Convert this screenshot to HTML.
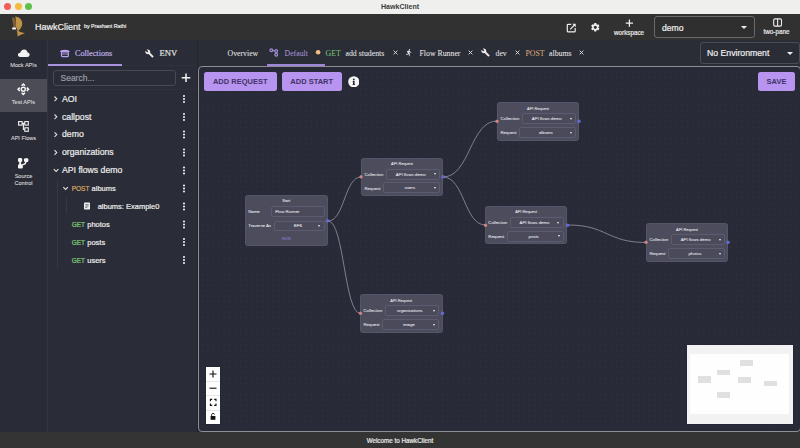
<!DOCTYPE html>
<html><head><meta charset="utf-8">
<style>
*{margin:0;padding:0;box-sizing:border-box}
html,body{width:800px;height:448px;overflow:hidden;background:#2a2c35;font-family:"Liberation Sans",sans-serif;color:#e6e6e6;-webkit-text-stroke-width:0.2px}
.a{position:absolute}
#title{left:0;top:0;width:800px;height:14px;background:#efefed}
.tl{width:7px;height:7px;border-radius:50%;top:3px}
#title .t{left:0;width:800px;top:2.8px;text-align:center;font-size:7.1px;font-weight:bold;color:#3c3c3c;-webkit-text-stroke-width:0}
#hdr{left:0;top:14px;width:800px;height:26px;background:#313131}
#side{left:0;top:40px;width:48px;height:392px;background:#292b36;border-right:1px solid #30323d}
.sl{-webkit-text-stroke-width:0.1px;left:0;width:47px;text-align:center;font-size:5.6px;color:#d8d8d8;line-height:7px}
#coll{left:47px;top:40px;width:151px;height:392px;background:#2a2c37;border-right:1px solid #24252c}
.serif{font-family:"Liberation Serif",serif}
.tree{font-size:8.7px;color:#ededed;white-space:nowrap;line-height:11px}
.dots{left:136px;width:3px}
.dots i{display:block;width:2px;height:2px;background:#f0f0f0;border-radius:50%;margin-bottom:1.2px}
.ch .m{font-size:6.5px}.ch .n{font-size:7.5px;margin-left:2.2px}.chev{font-size:8px;color:#ddd}
#status{left:0;top:432px;width:800px;height:16px;background:#343434}
#canvas{left:197.7px;top:65.8px;width:603.3px;height:366.6px;background:#282a37;border:1.3px solid #8e8e94;border-radius:4px;overflow:hidden}
.btn{-webkit-text-stroke-width:0;background:#b794ef;color:#3f3265;font-size:7.5px;font-weight:bold;border-radius:2.5px;text-align:center;line-height:19px;height:19px}
.node{-webkit-text-stroke-width:0.05px;background:#4c4c5d;border:0.8px solid #55556a;border-radius:2.5px;font-size:4.3px;color:#e8e8ee;line-height:5px}
.node .h{position:absolute;left:0;width:100%;text-align:center;top:2.6px;font-size:3.9px}
.node .lb{position:absolute;left:2.5px}
.node .sel{position:absolute;border:0.8px solid #5c5c70;border-radius:2px;background:#4a4a5b;text-align:center;line-height:9.5px}
.node .sel b{position:absolute;right:3.6px;top:3.8px;width:0;height:0;border-left:1.4px solid transparent;border-right:1.4px solid transparent;border-top:2.1px solid #f0f0f0}
.hd{width:3.1px;height:3.1px;border-radius:50%;margin:-1.55px 0 0 -1.55px;border:0.5px solid rgba(200,200,255,.35)}
.tab{-webkit-text-stroke-width:0.05px;top:48.5px;font-size:7.8px;color:#e6e6e6;white-space:nowrap;line-height:10px}
.x{font-size:8px;color:#e0e0e0}
.ctl{left:7px;width:14px;height:14.3px;background:#fefefe;border-bottom:0.5px solid #eee}
</style></head><body>
<div id="title" class="a">
  <div class="a tl" style="left:4px;background:#ed5f58"></div>
  <div class="a tl" style="left:14.5px;background:#f2bb3b"></div>
  <div class="a tl" style="left:25px;background:#5fc04a"></div>
  <div class="a t">HawkClient</div>
</div>
<div id="hdr" class="a">
  <svg class="a" style="left:10px;top:2px" width="18" height="22" viewBox="0 0 18 22">
    <path d="M2,1.5 C4,0.8 5.6,3 5.9,6 L6,11 L3.6,11.6 C3,8 2.2,4.5 2,1.5Z" fill="#7d5c38"/>
    <path d="M5.2,0.6 C9,1 12,3.5 12.2,7 C12.4,10.5 10.5,13 8.4,14.9 C7,13.5 6.2,12 6,10 C6.2,6.5 6,3 5.2,0.6Z" fill="#bf9347"/>
    <path d="M6.4,13.8 C8,15.4 11,16.5 15,17.2 C12,18.2 9.5,19.2 7.6,20.6 C7.8,18.5 7.2,16 6.4,13.8Z" fill="#bf9347"/>
    <ellipse cx="4.1" cy="12.4" rx="2.1" ry="1.2" fill="#f2f2f2"/>
  </svg>
  <div class="a" style="left:35px;top:8px;font-size:9px;color:#f0f0f0">HawkClient</div>
  <div class="a" style="left:84px;top:9.3px;font-size:5.3px;color:#e6e6e6">by Prashant Rathi</div>
  <!-- right icons -->
  <svg class="a" style="left:565.5px;top:8.5px" width="11" height="10" viewBox="0 0 11 10"><path d="M5.2,1.3 H2.2 C1.6,1.3 1.3,1.6 1.3,2.2 V8 C1.3,8.6 1.6,8.9 2.2,8.9 H8.3 C8.9,8.9 9.2,8.6 9.2,8 V5" fill="none" stroke="#eee" stroke-width="1.2"/><path d="M6.3,0.8 H9.7 V4.2 Z" fill="#eee"/><path d="M9,1.5 L4.2,6.3" stroke="#eee" stroke-width="1.2"/></svg>
  <svg class="a" style="left:589.6px;top:7.6px" width="10.6" height="10.6" viewBox="0 0 24 24"><path fill="#eee" d="M19.14 12.94c.04-.3.06-.61.06-.94 0-.32-.02-.64-.07-.94l2.03-1.58a.49.49 0 0 0 .12-.61l-1.92-3.32a.488.488 0 0 0-.59-.22l-2.39.96c-.5-.38-1.03-.7-1.62-.94l-.36-2.54a.484.484 0 0 0-.48-.41h-3.84c-.24 0-.43.17-.47.41l-.36 2.54c-.59.24-1.13.57-1.62.94l-2.39-.96c-.22-.08-.47 0-.59.22L2.74 8.87c-.12.21-.08.47.12.61l2.03 1.58c-.05.3-.09.63-.09.94s.02.64.07.94l-2.03 1.58a.49.49 0 0 0-.12.61l1.92 3.32c.12.22.37.29.59.22l2.39-.96c.5.38 1.03.7 1.62.94l.36 2.54c.05.24.24.41.48.41h3.84c.24 0 .44-.17.47-.41l.36-2.54c.59-.24 1.13-.56 1.62-.94l2.39.96c.22.08.47 0 .59-.22l1.92-3.32c.12-.22.07-.47-.12-.61l-2.01-1.58zM12 15.6c-1.98 0-3.6-1.62-3.6-3.6s1.62-3.6 3.6-3.6 3.6 1.62 3.6 3.6-1.62 3.6-3.6 3.6z"/></svg>
  <svg class="a" style="left:625px;top:4.5px" width="9" height="8" viewBox="0 0 9 8"><path d="M0.8,4.1 H8 M4.4,0.5 V7.7" stroke="#f0f0f0" stroke-width="1.2"/></svg>
  <div class="a" style="left:614px;top:14.8px;font-size:6.3px;color:#e6e6e6">workspace</div>
  <div class="a" style="left:654px;top:2px;width:101px;height:21.5px;border:1px solid #6a6a6a;border-radius:3px;background:#2f2f2f"></div>
  <div class="a" style="left:662px;top:8.7px;font-size:8.6px;color:#f0f0f0">demo</div>
  <div class="a" style="left:741px;top:12px;width:0;height:0;border-left:3px solid transparent;border-right:3px solid transparent;border-top:3px solid #eee"></div>
  <svg class="a" style="left:771.5px;top:2.5px" width="11" height="11" viewBox="0 0 11 11"><rect x="1.7" y="1.9" width="7.8" height="7.2" rx="1.3" fill="none" stroke="#eee" stroke-width="1.1"/><path d="M5.6,1.9 V9.1" stroke="#eee" stroke-width="1.1"/></svg>
  <div class="a" style="left:763.5px;top:13.8px;font-size:6.3px;color:#e6e6e6">two-pane</div>
</div>
<div id="side" class="a">
  <div class="a" style="left:0;top:39px;width:47px;height:33px;background:#4b4c56"></div>
  <svg class="a" style="left:16.9px;top:9px" width="13.6" height="8.6" viewBox="0 0 13 9"><path d="M3,8.5 C1,8.5 0.2,7 0.4,5.8 C0.6,4.6 1.6,3.8 2.8,3.9 C3.2,1.8 5,0.4 7,0.5 C9,0.6 10.3,2 10.5,3.7 C11.8,3.8 12.7,4.8 12.6,6.1 C12.5,7.5 11.4,8.5 10,8.5Z" fill="#f2f2f2"/></svg>
  <div class="a sl" style="top:22px">Mock APIs</div>
  <svg class="a" style="left:17.1px;top:43.3px" width="12.6" height="12.6" viewBox="2 2 20 20"><path fill="#f4f4f4" d="M15.54 5.54L13.77 7.3 12 5.54 10.23 7.3 8.46 5.54 12 2zm2.92 10l-1.76-1.77L18.46 12l-1.76-1.77 1.76-1.77L22 12zm-10 2.92l1.77-1.76L12 18.46l1.77-1.76 1.77 1.76L12 22zm-2.92-10l1.76 1.77L5.54 12l1.76 1.77-1.76 1.77L2 12z"/><circle cx="12" cy="12" r="3.2" fill="none" stroke="#f4f4f4" stroke-width="2.2"/></svg>
  <div class="a sl" style="top:59px">Test APIs</div>
  <svg class="a" style="left:18px;top:81px" width="11" height="11" viewBox="0 0 11 11"><rect x="0.6" y="0.6" width="3.5" height="3.5" fill="none" stroke="#f2f2f2" stroke-width="1.1"/><rect x="6.8" y="0.6" width="3.5" height="3.5" fill="none" stroke="#f2f2f2" stroke-width="1.1"/><rect x="6.8" y="6.8" width="3.5" height="3.5" fill="none" stroke="#f2f2f2" stroke-width="1.1"/><path d="M4.1,2.35 H6.8 M5.4,2.35 V8.5 H6.8" fill="none" stroke="#f2f2f2" stroke-width="1.1"/></svg>
  <div class="a sl" style="top:95px">API Flows</div>
  <svg class="a" style="left:18.4px;top:118.3px" width="10.6" height="10.6" viewBox="0 0 10.6 10.6"><rect x="0" y="0" width="4.2" height="4" rx="1.2" fill="#f4f4f4"/><rect x="6" y="0.3" width="4.4" height="3.6" rx="1.2" fill="#f4f4f4"/><rect x="0" y="6.2" width="4.8" height="4.3" rx="1.2" fill="#f4f4f4"/><rect x="1.2" y="3" width="1.9" height="4" fill="#f4f4f4"/><path d="M8,3 C8,5.5 6.5,6.6 4.2,6.8" fill="none" stroke="#f4f4f4" stroke-width="1.5"/></svg>
  <div class="a sl" style="top:133px">Source<br>Control</div>
</div>
<div id="coll" class="a">
  <svg class="a" style="left:12px;top:9px" width="12" height="9" viewBox="0 0 12 9"><path d="M0.9,3 C0.9,1.6 2.8,0.8 5.8,0.8 C8.8,0.8 10.7,1.6 10.7,3 Z" fill="#b9a2ee"/><rect x="2.5" y="2.8" width="6.8" height="4.9" rx="1" fill="none" stroke="#b9a2ee" stroke-width="1.2"/><path d="M2.5,5 H9.3" stroke="#b9a2ee" stroke-width="0.9"/></svg>
  <div class="a serif" style="left:28px;top:8.7px;font-size:8.2px;color:#bfaee6;font-weight:normal">Collections</div>
  <svg class="a" style="left:98px;top:8.5px" width="9" height="9" viewBox="0 0 24 24"><path fill="#eee" d="M22.7 19l-9.1-9.1c.9-2.3.4-5-1.5-6.9-2-2-5-2.4-7.4-1.3L9 6 6 9 1.6 4.7C.4 7.1.9 10.1 2.9 12.1c1.9 1.9 4.6 2.4 6.9 1.5l9.1 9.1c.4.4 1 .4 1.4 0l2.3-2.3c.5-.4.5-1.1.1-1.4z"/></svg>
  <div class="a serif" style="left:112.5px;top:7.5px;font-size:8.6px;color:#e0e0e0;font-weight:normal">ENV</div>
  <div class="a" style="left:0;top:25px;width:150px;height:0.6px;background:#30323c"></div>
  <div class="a" style="left:1px;top:24.2px;width:74px;height:1.9px;background:#ab92e0"></div>
  <div class="a" style="left:6px;top:29.5px;width:122.5px;height:16px;border:0.9px solid #474a55;border-radius:3px"></div>
  <div class="a" style="left:13.5px;top:32.5px;font-size:8.5px;color:#9a9ca3">Search...</div>
  <svg class="a" style="left:133px;top:33px" width="12" height="10" viewBox="0 0 12 10"><path d="M1.7,4.7 H10.3 M6,0.4 V9" stroke="#f4f4f4" stroke-width="1.5"/></svg>
  <div class="a" style="left:0;top:49.3px;width:150px;height:0.6px;background:#30323a"></div>
  <!-- tree -->
  <div class="a tree" style="left:15px;top:54px">AOI</div>
  <div class="a tree" style="left:15px;top:72px">callpost</div>
  <div class="a tree" style="left:15px;top:89.3px">demo</div>
  <div class="a tree" style="left:15px;top:107.1px">organizations</div>
  <div class="a tree" style="left:15px;top:125px">API flows demo</div>
  <div class="a tree ch" style="left:24.7px;top:142.7px"><span class="m" style="color:#dea464">POST</span><span class="n">albums</span></div>
  <div class="a tree ch" style="left:50.7px;top:160.8px"><span class="n" style="margin:0">albums: Example0</span></div>
  <div class="a tree ch" style="left:24.7px;top:178.5px"><span class="m" style="color:#80cf7c">GET</span><span class="n">photos</span></div>
  <div class="a tree ch" style="left:24.7px;top:196.5px"><span class="m" style="color:#80cf7c">GET</span><span class="n">posts</span></div>
  <div class="a tree ch" style="left:24.7px;top:214.5px"><span class="m" style="color:#80cf7c">GET</span><span class="n">users</span></div>
</div>
<div class="a" style="left:47px;top:40px;width:0.8px;height:392px;background:#33353f"></div>
<div id="main" class="a" style="left:198px;top:40px;width:602px;height:26px;background:#2a2c36"></div>
<div class="a tab serif" style="left:227.5px">Overview</div>
<div class="a tab serif" style="left:284.5px;color:#a592d6">Default</div>
<div class="a tab serif" style="left:325.5px;color:#74c274">GET</div>
<div class="a tab serif" style="left:345.5px">add students</div>
<div class="a tab serif" style="left:419.5px">Flow Runner</div>
<div class="a tab serif" style="left:495.5px">dev</div>
<div class="a tab serif" style="left:525.5px;color:#d6a878">POST</div>
<div class="a tab serif" style="left:549px">albums</div>
<div class="a" style="left:266.5px;top:64px;width:58.5px;height:1.8px;background:#9d86d9"></div>
<div id="env" class="a" style="left:700px;top:42px;width:99.6px;height:21.5px;border:0.8px solid #4a4c56;border-radius:3px"></div>
<div class="a" style="left:707px;top:47.5px;font-size:8.7px;color:#f0f0f0">No Environment</div>
<div class="a" style="left:787px;top:52px;width:0;height:0;border-left:3px solid transparent;border-right:3px solid transparent;border-top:3px solid #eee"></div>
<div id="canvas" class="a"></div>
<svg class="a" style="left:200px;top:68px" width="600" height="363"><defs><pattern id="dg" patternUnits="userSpaceOnUse" x="0" y="0" width="5.45" height="5.45"><circle cx="2.45" cy="4.7" r="0.6" fill="#313444"/></pattern></defs><rect width="600" height="363" fill="url(#dg)"/></svg>
<!-- tab icons -->
<svg class="a" style="left:269px;top:48px" width="10" height="9" viewBox="0 0 10 9"><g fill="none" stroke="#a08ed4" stroke-width="1.2"><circle cx="2.3" cy="2.2" r="1.4"/><circle cx="7.2" cy="3" r="1.4"/><circle cx="7.2" cy="6.8" r="1.4"/><path d="M3.7,2.5 L5.8,2.8 M7.2,4.4 V5.4"/></g></svg>
<svg class="a" style="left:314px;top:48px" width="8" height="8"><circle cx="4.1" cy="4.3" r="2.3" fill="#f2bf82"/></svg>
<svg class="a" style="left:404.5px;top:47.5px" width="8" height="9" viewBox="0 0 24 24"><path fill="#eee" d="M13.49 5.48c1.1 0 2-.9 2-2s-.9-2-2-2-2 .9-2 2 .9 2 2 2zm-3.6 13.9l1-4.4 2.1 2v6h2v-7.5l-2.1-2 .6-3c1.3 1.5 3.3 2.5 5.5 2.5v-2c-1.9 0-3.5-1-4.3-2.4l-1-1.6c-.4-.6-1-1-1.7-1-.3 0-.5.1-.8.1l-5.2 2.2v4.7h2v-3.4l1.8-.7-1.6 8.1-4.9-1-.4 2 7 1.4z"/></svg>
<svg class="a" style="left:481px;top:47.5px" width="9" height="9" viewBox="0 0 24 24"><path fill="#eee" d="M22.7 19l-9.1-9.1c.9-2.3.4-5-1.5-6.9-2-2-5-2.4-7.4-1.3L9 6 6 9 1.6 4.7C.4 7.1.9 10.1 2.9 12.1c1.9 1.9 4.6 2.4 6.9 1.5l9.1 9.1c.4.4 1 .4 1.4 0l2.3-2.3c.5-.4.5-1.1.1-1.4z"/></svg>
<svg class="a" style="left:392.5px;top:50px" width="5" height="5" viewBox="0 0 5 5"><path d="M0.6,0.6 L4.4,4.4 M4.4,0.6 L0.6,4.4" stroke="#e6e6e6" stroke-width="0.9"/></svg>
<svg class="a" style="left:468px;top:50px" width="5" height="5" viewBox="0 0 5 5"><path d="M0.6,0.6 L4.4,4.4 M4.4,0.6 L0.6,4.4" stroke="#e6e6e6" stroke-width="0.9"/></svg>
<svg class="a" style="left:514.5px;top:50px" width="5" height="5" viewBox="0 0 5 5"><path d="M0.6,0.6 L4.4,4.4 M4.4,0.6 L0.6,4.4" stroke="#e6e6e6" stroke-width="0.9"/></svg>
<svg class="a" style="left:578.5px;top:50px" width="5" height="5" viewBox="0 0 5 5"><path d="M0.6,0.6 L4.4,4.4 M4.4,0.6 L0.6,4.4" stroke="#e6e6e6" stroke-width="0.9"/></svg>
<!-- tree chevrons -->
<svg class="a" style="left:0;top:0" width="200" height="300"><g fill="none" stroke="#e0e0e0" stroke-width="1.1">
<path d="M54.5,96.5 L56.8,98.8 L54.5,101.1"/>
<path d="M54.5,114.5 L56.8,116.8 L54.5,119.1"/>
<path d="M54.5,132.3 L56.8,134.6 L54.5,136.9"/>
<path d="M54.5,150.2 L56.8,152.5 L54.5,154.8"/>
<path d="M53.8,169.2 L56.1,171.5 L58.4,169.2"/>
<path d="M63.3,187.2 L65.6,189.5 L67.9,187.2"/>
</g>
<path d="M57.5,180 V268" stroke="#3a3c46" stroke-width="0.8"/>
<path d="M66.5,198 V214" stroke="#3a3c46" stroke-width="0.8"/>
<rect x="84" y="202.5" width="6" height="7" rx="0.8" fill="#f0f0f0"/>
<path d="M85.3,204.6 H88.7 M85.3,206.1 H88.7 M85.3,207.6 H87.3" stroke="#2a2c36" stroke-width="0.6"/>
<g fill="#f0f0f0">
<circle cx="184" cy="96" r="1.05"/><circle cx="184" cy="99" r="1.05"/><circle cx="184" cy="102" r="1.05"/><circle cx="184" cy="114" r="1.05"/><circle cx="184" cy="117" r="1.05"/><circle cx="184" cy="120" r="1.05"/><circle cx="184" cy="131.5" r="1.05"/><circle cx="184" cy="134.5" r="1.05"/><circle cx="184" cy="137.5" r="1.05"/><circle cx="184" cy="149.5" r="1.05"/><circle cx="184" cy="152.5" r="1.05"/><circle cx="184" cy="155.5" r="1.05"/><circle cx="184" cy="167.5" r="1.05"/><circle cx="184" cy="170.5" r="1.05"/><circle cx="184" cy="173.5" r="1.05"/><circle cx="184" cy="185.5" r="1.05"/><circle cx="184" cy="188.5" r="1.05"/><circle cx="184" cy="191.5" r="1.05"/><circle cx="184" cy="203.5" r="1.05"/><circle cx="184" cy="206.5" r="1.05"/><circle cx="184" cy="209.5" r="1.05"/><circle cx="184" cy="221.5" r="1.05"/><circle cx="184" cy="224.5" r="1.05"/><circle cx="184" cy="227.5" r="1.05"/><circle cx="184" cy="239" r="1.05"/><circle cx="184" cy="242" r="1.05"/><circle cx="184" cy="245" r="1.05"/><circle cx="184" cy="257" r="1.05"/><circle cx="184" cy="260" r="1.05"/><circle cx="184" cy="263" r="1.05"/></g></svg>

<svg class="a" style="left:0;top:0" width="800" height="448"><g fill="none" stroke="#85858e" stroke-width="0.95"><path d="M328,221 C344.5,221 344.5,177 361,177"/><path d="M328,221 C344.25,221 344.25,313.5 360.5,313.5"/><path d="M443,177 C470.0,177 470.0,121 497,121"/><path d="M443,177 C464.25,177 464.25,225 485.5,225"/><path d="M568,225 C607.0,225 607.0,242.5 646,242.5"/></g></svg>
<div class="a node" style="left:361px;top:157.5px;width:82px;height:38.5px">
 <div class="h">API Request</div>
 <div class="lb" style="top:13.3px">Collection</div>
 <div class="sel" style="left:24.2px;top:10px;width:54px;height:11px;padding-right:5px">API flows demo<b></b></div>
 <div class="lb" style="top:27px">Request</div>
 <div class="sel" style="left:20.8px;top:23.8px;width:57.6px;height:11px;padding-right:3.5px">users<b></b></div>
</div>
<div class="a node" style="left:497px;top:102px;width:82px;height:38.5px">
 <div class="h">API Request</div>
 <div class="lb" style="top:13.3px">Collection</div>
 <div class="sel" style="left:24.2px;top:10px;width:54px;height:11px;padding-right:5px">API flows demo<b></b></div>
 <div class="lb" style="top:27px">Request</div>
 <div class="sel" style="left:20.8px;top:23.8px;width:57.6px;height:11px;padding-right:3.5px">albums<b></b></div>
</div>
<div class="a node" style="left:484.8px;top:205.8px;width:82.5px;height:38.5px">
 <div class="h">API Request</div>
 <div class="lb" style="top:13.3px">Collection</div>
 <div class="sel" style="left:24.2px;top:10px;width:54px;height:11px;padding-right:5px">API flows demo<b></b></div>
 <div class="lb" style="top:27px">Request</div>
 <div class="sel" style="left:20.8px;top:23.8px;width:57.6px;height:11px;padding-right:3.5px">posts<b></b></div>
</div>
<div class="a node" style="left:646px;top:223px;width:82px;height:38.5px">
 <div class="h">API Request</div>
 <div class="lb" style="top:13.3px">Collection</div>
 <div class="sel" style="left:24.2px;top:10px;width:54px;height:11px;padding-right:5px">API flows demo<b></b></div>
 <div class="lb" style="top:27px">Request</div>
 <div class="sel" style="left:20.8px;top:23.8px;width:57.6px;height:11px;padding-right:3.5px">photos<b></b></div>
</div>
<div class="a node" style="left:360px;top:294px;width:82.5px;height:38.5px">
 <div class="h">API Request</div>
 <div class="lb" style="top:13.3px">Collection</div>
 <div class="sel" style="left:24.2px;top:10px;width:54px;height:11px;padding-right:5px">organizations<b></b></div>
 <div class="lb" style="top:27px">Request</div>
 <div class="sel" style="left:20.8px;top:23.8px;width:57.6px;height:11px;padding-right:3.5px">image<b></b></div>
</div>
<div class="a node" style="left:245px;top:195px;width:82.5px;height:51px">
 <div class="h" style="top:2.3px">Start</div>
 <div class="lb" style="top:13.3px;left:2.2px">Name</div>
 <div class="sel" style="left:25.4px;top:10.4px;width:53.4px;height:11px;text-align:left;padding-left:2.8px">Flow Runner</div>
 <div class="lb" style="top:27px;left:2.2px">Traverse As</div>
 <div class="sel" style="left:28.2px;top:24.6px;width:50.6px;height:10px;line-height:8.5px;padding-right:3px">BFS<b style="top:3.8px"></b></div>
 <div class="h" style="top:39.7px;color:#8f7fd0">RUN</div>
</div>
<div class="a btn" style="left:204px;top:72px;width:72.5px">ADD REQUEST</div>
<div class="a btn" style="left:281.7px;top:72px;width:60px">ADD START</div>
<svg class="a" style="left:347.5px;top:75.6px" width="11.6" height="11.6" viewBox="0 0 11.6 11.6"><circle cx="5.8" cy="5.8" r="5.6" fill="#f6f6f6"/><circle cx="5.8" cy="3.5" r="0.95" fill="#262834"/><path d="M4.6,5 H6.6 V8.2 H7.1 V8.9 H4.5 V8.2 H5.0 V5.7 H4.6Z" fill="#262834"/></svg>
<div class="a btn" style="left:758px;top:72px;width:37px">SAVE</div>
<svg class="a" style="left:0;top:0" width="800" height="448"><g stroke="rgba(210,210,255,.35)" stroke-width="0.5"><circle cx="361" cy="176.8" r="1.5" fill="#e07d6e"/><circle cx="443" cy="176.8" r="1.5" fill="#5a5ee6"/><circle cx="497" cy="121.3" r="1.5" fill="#e07d6e"/><circle cx="579" cy="121.3" r="1.5" fill="#5a5ee6"/><circle cx="485.5" cy="225.3" r="1.5" fill="#e07d6e"/><circle cx="567.5" cy="225.3" r="1.5" fill="#5a5ee6"/><circle cx="646" cy="242.3" r="1.5" fill="#e07d6e"/><circle cx="728" cy="242.3" r="1.5" fill="#5a5ee6"/><circle cx="360.5" cy="313.3" r="1.5" fill="#e07d6e"/><circle cx="442.5" cy="313.3" r="1.5" fill="#5a5ee6"/><circle cx="327.5" cy="220.8" r="1.5" fill="#5a5ee6"/></g></svg>
<!-- controls -->
<div class="a" style="left:206px;top:367px;width:14px;height:57px;background:#fefefe;box-shadow:0 0 1px rgba(0,0,0,.3)"></div>
<div class="a" style="left:206px;top:381.2px;width:14px;height:0.6px;background:#e6e6e6"></div>
<div class="a" style="left:206px;top:395.4px;width:14px;height:0.6px;background:#e6e6e6"></div>
<div class="a" style="left:206px;top:409.6px;width:14px;height:0.6px;background:#e6e6e6"></div>
<svg class="a" style="left:206px;top:367px" width="14" height="57" viewBox="0 0 14 57">
 <path d="M3.5,7 H10.5 M7,3.5 V10.5" stroke="#111" stroke-width="1.1"/>
 <path d="M3.5,21.2 H10.5" stroke="#111" stroke-width="1.1"/>
 <path d="M4.4,34.2 V32.4 H6.2 M8.2,32.4 H10 V34.2 M10,36.6 V38.4 H8.2 M6.2,38.4 H4.4 V36.6" fill="none" stroke="#111" stroke-width="1.1"/>
 <rect x="4.6" y="49" width="4.8" height="3.8" fill="#111"/>
 <path d="M5.6,49 V47.6 C5.6,46 8.4,46 8.4,47.6" fill="none" stroke="#111" stroke-width="0.9"/>
</svg>
<!-- minimap -->
<div class="a" style="left:687px;top:345px;width:105.5px;height:78.5px;background:#f2f2f2;box-shadow:0 0 1px rgba(0,0,0,.3)"></div>
<div class="a" style="left:690.3px;top:354.2px;width:98.7px;height:60px;background:#fefefe"></div>
<div class="a" style="left:698.2px;top:376px;width:13.1px;height:7.4px;background:#e0e0e0"></div>
<div class="a" style="left:717.4px;top:369.5px;width:13.1px;height:5.8px;background:#e0e0e0"></div>
<div class="a" style="left:739.5px;top:360.3px;width:13.1px;height:6px;background:#e0e0e0"></div>
<div class="a" style="left:737.6px;top:377.4px;width:13.1px;height:6px;background:#e0e0e0"></div>
<div class="a" style="left:764px;top:380.5px;width:13px;height:5.8px;background:#e0e0e0"></div>
<div class="a" style="left:717.4px;top:392px;width:13.1px;height:6px;background:#e0e0e0"></div>

<div id="status" class="a"><div class="a" style="left:0;width:800px;top:4.5px;text-align:center;font-size:6.3px;color:#e8e8e8">Welcome to HawkClient</div></div>
</body></html>
